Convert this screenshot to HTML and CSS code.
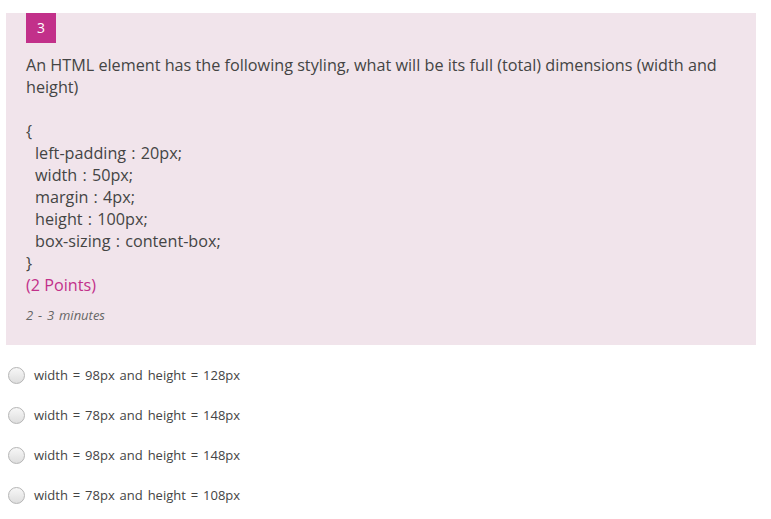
FILE: index.html
```html
<!DOCTYPE html>
<html>
<head>
<meta charset="utf-8">
<link rel="stylesheet" href="styles.css">
</head>
<body>
<div class="question">
  <div class="badge">3</div>
  <div class="title">An HTML element has the following styling, what will be its full (total) dimensions (width and height)</div>
  <div class="code">
    <div>{</div>
    <div class="indent">left-padding : 20px;</div>
    <div class="indent">width : 50px;</div>
    <div class="indent">margin : 4px;</div>
    <div class="indent">height : 100px;</div>
    <div class="indent">box-sizing : content-box;</div>
    <div>}</div>
  </div>
  <div class="points">(2 Points)</div>
  <div class="time">2 - 3 minutes</div>
</div>
<div class="options">
  <label class="option"><span class="radio"></span><span>width = 98px and height = 128px</span></label>
  <label class="option"><span class="radio"></span><span>width = 78px and height = 148px</span></label>
  <label class="option"><span class="radio"></span><span>width = 98px and height = 148px</span></label>
  <label class="option"><span class="radio"></span><span>width = 78px and height = 108px</span></label>
</div>
</body>
</html>
```
FILE: styles.css
```css
html, body {
  margin: 0;
  padding: 0;
  background: #fff;
}
body {
  font-family: "Open Sans", "Noto Sans", sans-serif;
  color: #444;
}
.question {
  background: #f1e4eb;
  margin: 13px 15px 0 6px;
  padding: 0 20px 21px 20px;
}
.badge {
  width: 30px;
  height: 30px;
  background: #c2308a;
  color: #fff;
  font-size: 14px;
  line-height: 30px;
  text-align: center;
}
.title {
  margin-top: 11px;
  font-size: 16.2px;
  line-height: 22px;
  color: #444;
}
.code {
  margin-top: 22px;
  font-size: 16.2px;
  line-height: 22px;
  word-spacing: 1px;
  color: #444;
}
.indent {
  padding-left: 9px;
}
.points {
  font-size: 16.2px;
  line-height: 22px;
  color: #c2308a;
}
.time {
  margin-top: 10px;
  font-size: 13px;
  line-height: 18px;
  font-style: italic;
  word-spacing: 1.5px;
  color: #666;
}
.options {
  margin-top: 10px;
}
.option {
  display: flex;
  align-items: center;
  height: 40px;
  font-size: 13px;
  word-spacing: 1.5px;
  color: #444;
}
.radio {
  width: 15px;
  height: 15px;
  border-radius: 50%;
  border: 1px solid #b5b5b5;
  background: linear-gradient(#f7f7f7, #dedede);
  margin: 0 9px 0 8px;
  box-sizing: content-box;
}
```
